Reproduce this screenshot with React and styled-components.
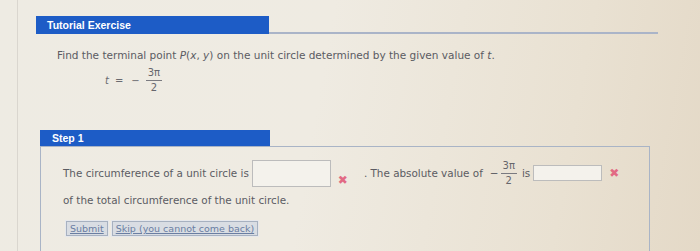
import React from "react";
import styled, { createGlobalStyle } from "styled-components";

const GlobalStyle = createGlobalStyle`
  html, body {
    margin: 0;
    padding: 0;
  }
  body {
    width: 700px;
    height: 251px;
    overflow: hidden;
    background: linear-gradient(100deg, #eeebe3 0%, #efebe2 45%, #e9e1d2 80%, #e4d9c7 100%);
    font-family: "DejaVu Sans", Verdana, sans-serif;
  }
`;

const Page = styled.div`
  height: 251px;
  padding-left: 17px;
`;

const Frame = styled.div`
  height: 100%;
  border-left: 1px solid #dad6cf;
  padding: 16px 0 0 18px;
  width: 641px;
  box-sizing: border-box;
  overflow: hidden;
`;

const HeadRow = styled.div`
  display: flex;
  align-items: flex-end;
`;

const HeadBar = styled.div`
  width: ${(p) => p.w}px;
  height: ${(p) => p.h}px;
  background: #1d5cc6;
  color: #fff;
  font-family: "Liberation Sans", Arial, sans-serif;
  font-weight: bold;
  font-size: 10.5px;
  display: flex;
  align-items: center;
  padding-left: ${(p) => p.pad}px;
  box-sizing: border-box;
  flex-shrink: 0;
`;

const HeadLine = styled.div`
  flex: 1;
  border-bottom: 2px solid #aab4c8;
`;

const Prompt = styled.p`
  margin: 15px 0 0 21px;
  font-size: 10.5px;
  line-height: 12px;
  color: #5b5b62;
`;

const Var = styled.i`
  font-style: italic;
`;

const MathLine = styled.div`
  display: flex;
  align-items: center;
  margin: 6px 0 0 69px;
  font-size: 10px;
  color: #6a6a70;
`;

const Sym = styled.span`
  margin-left: ${(p) => p.ml || 0}px;
`;

const Frac = styled.span`
  display: inline-flex;
  flex-direction: column;
  align-items: center;
  font-size: ${(p) => p.size || 10}px;
  line-height: 1.15;
  color: #66666c;
  margin-left: ${(p) => p.ml || 0}px;
`;

const Num = styled.span`
  border-bottom: 1px solid #7a7a80;
  padding: 0 2px 1px;
`;

const Den = styled.span`
  padding-top: 1px;
`;

const StepWrap = styled.div`
  margin: 37px 0 0 4px;
  width: 610px;
`;

const StepBar = styled.div`
  width: 230px;
  height: 16px;
  background: #1d5cc6;
  color: #fff;
  font-family: "Liberation Sans", Arial, sans-serif;
  font-weight: bold;
  font-size: 10.5px;
  display: flex;
  align-items: center;
  padding-left: 12px;
  box-sizing: border-box;
`;

const StepBox = styled.div`
  border: 1px solid #a9b4c6;
  border-bottom: none;
  height: 105px;
  padding: 12px 0 0 22px;
  box-sizing: border-box;
  color: #5b5b62;
  font-size: 10.4px;
`;

const AnswerRow = styled.div`
  display: flex;
  align-items: center;
  height: 28px;
`;

const Input = styled.div`
  width: ${(p) => p.w}px;
  height: ${(p) => p.h}px;
  border: 1px solid #bcbcbc;
  background: #f4f2ec;
  box-sizing: border-box;
  margin-left: 3px;
`;

const Wrong = styled.span`
  color: #e26a84;
  font-family: "DejaVu Sans", sans-serif;
  font-weight: bold;
  font-size: 12px;
  margin-left: 7px;
  align-self: ${(p) => p.align || "center"};
`;

const Line2 = styled.div`
  margin-top: 7px;
  line-height: 12px;
`;

const Buttons = styled.div`
  display: flex;
  gap: 4px;
  margin: 15px 0 0 3px;
`;

const Btn = styled.button`
  font-family: "DejaVu Sans", Verdana, sans-serif;
  font-size: 9.5px;
  color: #6a7ea2;
  text-decoration: underline;
  background: #d9dde3;
  border: 1px solid #a7b1c0;
  outline: 1px solid #e6e8ec;
  height: 15px;
  padding: 0 3px;
  line-height: 13px;
  cursor: pointer;
`;

export default function App() {
  return (
    <Page>
      <GlobalStyle />
      <Frame>
        <HeadRow>
          <HeadBar w={233} h={18} pad={11}>Tutorial Exercise</HeadBar>
          <HeadLine />
        </HeadRow>
        <Prompt>
          Find the terminal point <Var>P</Var>(<Var>x</Var>, <Var>y</Var>) on the unit
          circle determined by the given value of <Var>t</Var>.
        </Prompt>
        <MathLine>
          <Var>t</Var>
          <Sym ml={6}>=</Sym>
          <Sym ml={8}>&minus;</Sym>
          <Frac ml={6}>
            <Num>3π</Num>
            <Den>2</Den>
          </Frac>
        </MathLine>
        <StepWrap>
          <StepBar>Step 1</StepBar>
          <StepBox>
            <AnswerRow>
              <span>The circumference of a unit circle is</span>
              <Input w={79} h={27} />
              <Wrong align="flex-end">✖</Wrong>
              <Sym ml={16}>. The absolute value of</Sym>
              <Sym ml={7}>&minus;</Sym>
              <Frac ml={2}>
                <Num>3π</Num>
                <Den>2</Den>
              </Frac>
              <Sym ml={5}>is</Sym>
              <Input w={69} h={16} />
              <Wrong>✖</Wrong>
            </AnswerRow>
            <Line2>of the total circumference of the unit circle.</Line2>
            <Buttons>
              <Btn>Submit</Btn>
              <Btn>Skip (you cannot come back)</Btn>
            </Buttons>
          </StepBox>
        </StepWrap>
      </Frame>
    </Page>
  );
}
